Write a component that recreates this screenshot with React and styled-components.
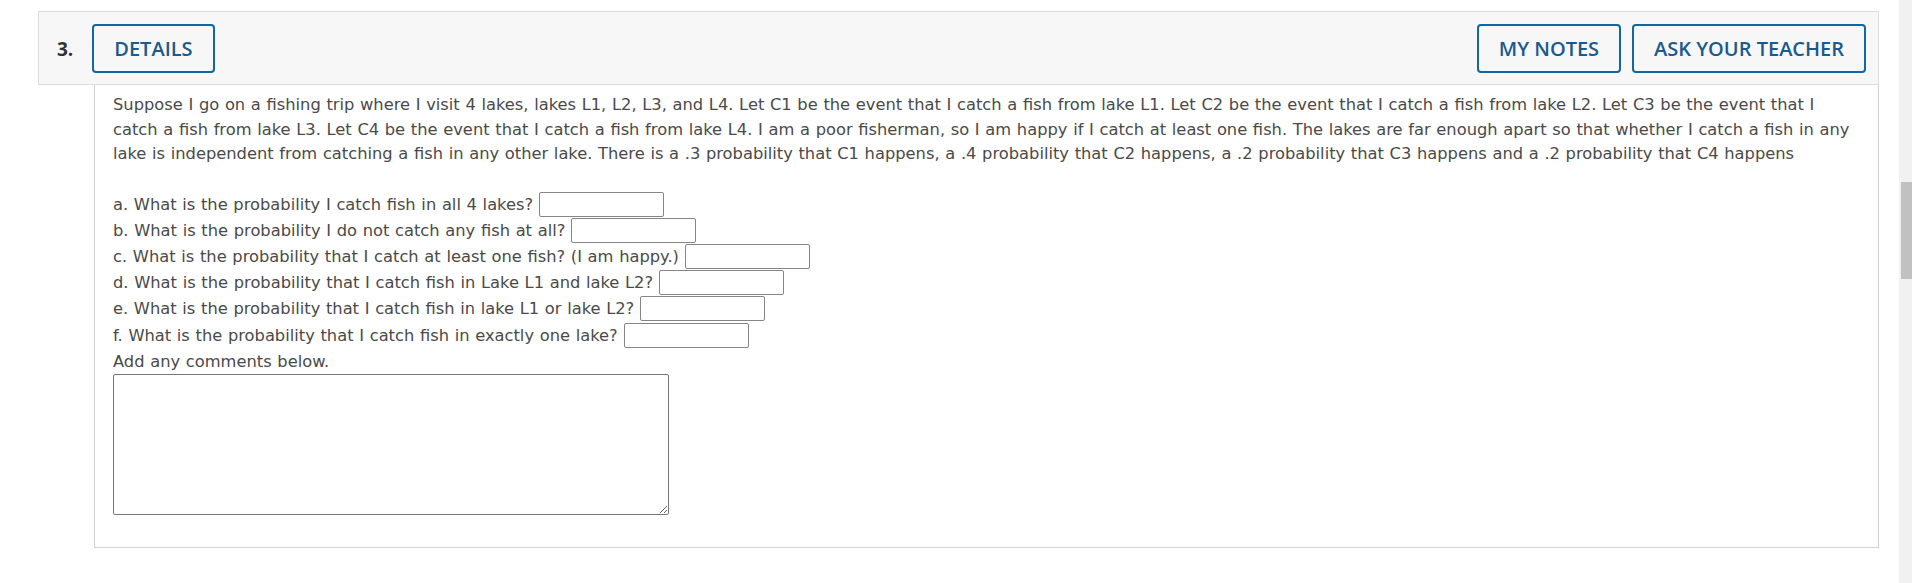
import React from "react";
import styled, { createGlobalStyle } from "styled-components";

const Global = createGlobalStyle`
  html, body, #root { margin: 0; padding: 0; height: 100%; }
  body { background: #ffffff; overflow: hidden; }
  * { box-sizing: border-box; }
`;

const Page = styled.div`
  display: flex;
  min-height: 100vh;
  width: 100%;
`;

const Main = styled.main`
  flex: 1;
  padding: 11px 20px 0 38px;
`;

const ScrollTrack = styled.div`
  width: 13px;
  background: #f1f1f1;
  display: flex;
  flex-direction: column;
  align-items: flex-end;
`;

const ScrollThumb = styled.div`
  margin-top: 182px;
  width: 11px;
  height: 97px;
  background: #c1c1c1;
`;

const Header = styled.div`
  display: flex;
  align-items: center;
  gap: 19px;
  background: #f7f7f7;
  border: 1px solid #dddddd;
  padding: 12px 12px 11px 18px;
`;

const Number = styled.span`
  font-family: "Open Sans", "Liberation Sans", sans-serif;
  font-weight: 700;
  font-size: 19px;
  color: #333333;
`;

const Spacer = styled.div`
  flex: 1;
`;

const Actions = styled.div`
  display: flex;
  gap: 11px;
`;

const OutlineButton = styled.button`
  display: flex;
  align-items: center;
  justify-content: center;
  height: 49px;
  padding: 0 ${(p) => p.$pad || 20}px;
  background: transparent;
  border: 2px solid #0f68a2;
  border-radius: 4px;
  font-family: "Open Sans", "Liberation Sans", sans-serif;
  font-weight: 600;
  font-size: 20px;
  color: #1a5a8c;
  letter-spacing: 0;
  cursor: pointer;
`;

const Body = styled.div`
  margin-left: 56px;
  border: 1px solid #d0d0d0;
  border-top: none;
  padding: 8px 19px 0 18px;
  font-family: "DejaVu Sans", sans-serif;
  font-size: 16.3px;
  word-spacing: 0.5px;
  color: #4a4a4a;
`;

const Paragraph = styled.p`
  margin: 0 0 24.5px 0;
  line-height: 24.5px;
`;

const Row = styled.div`
  display: flex;
  align-items: center;
  height: 26.2px;
  white-space: pre;
`;

const Answer = styled.input`
  width: 125px;
  height: 25px;
  margin-left: 6px;
  border: 1px solid #858585;
  border-radius: 2px;
  background: #fff;
  padding: 0 4px;
  font: inherit;
`;

const Comments = styled.textarea`
  display: block;
  width: 556px;
  height: 141px;
  margin: 0 0 32px 0;
  border: 1px solid #767676;
  border-radius: 2px;
  font: inherit;
  resize: both;
`;

const questions = [
  "a. What is the probability I catch fish in all 4 lakes?",
  "b. What is the probability I do not catch any fish at all?",
  "c. What is the probability that I catch at least one fish? (I am happy.)",
  "d. What is the probability that I catch fish in Lake L1 and lake L2?",
  "e. What is the probability that I catch fish in lake L1 or lake L2?",
  "f. What is the probability that I catch fish in exactly one lake?",
];

export default function App() {
  return (
    <>
      <Global />
      <Page>
        <Main>
          <Header>
            <Number>3.</Number>
            <OutlineButton $pad={20}>DETAILS</OutlineButton>
            <Spacer />
            <Actions>
              <OutlineButton $pad={20}>MY NOTES</OutlineButton>
              <OutlineButton $pad={20}>ASK YOUR TEACHER</OutlineButton>
            </Actions>
          </Header>
          <Body>
            <Paragraph>
              Suppose I go on a fishing trip where I visit 4 lakes, lakes L1, L2, L3, and L4. Let C1 be the
              event that I catch a fish from lake L1. Let C2 be the event that I catch a fish from lake L2.
              Let C3 be the event that I catch a fish from lake L3. Let C4 be the event that I catch a fish
              from lake L4. I am a poor fisherman, so I am happy if I catch at least one fish. The lakes are
              far enough apart so that whether I catch a fish in any lake is independent from catching a
              fish in any other lake. There is a .3 probability that C1 happens, a .4 probability that C2
              happens, a .2 probability that C3 happens and a .2 probability that C4 happens
            </Paragraph>
            {questions.map((q) => (
              <Row key={q}>
                {q}
                <Answer type="text" />
              </Row>
            ))}
            <Row>Add any comments below.</Row>
            <Comments />
          </Body>
        </Main>
        <ScrollTrack>
          <ScrollThumb />
        </ScrollTrack>
      </Page>
    </>
  );
}
